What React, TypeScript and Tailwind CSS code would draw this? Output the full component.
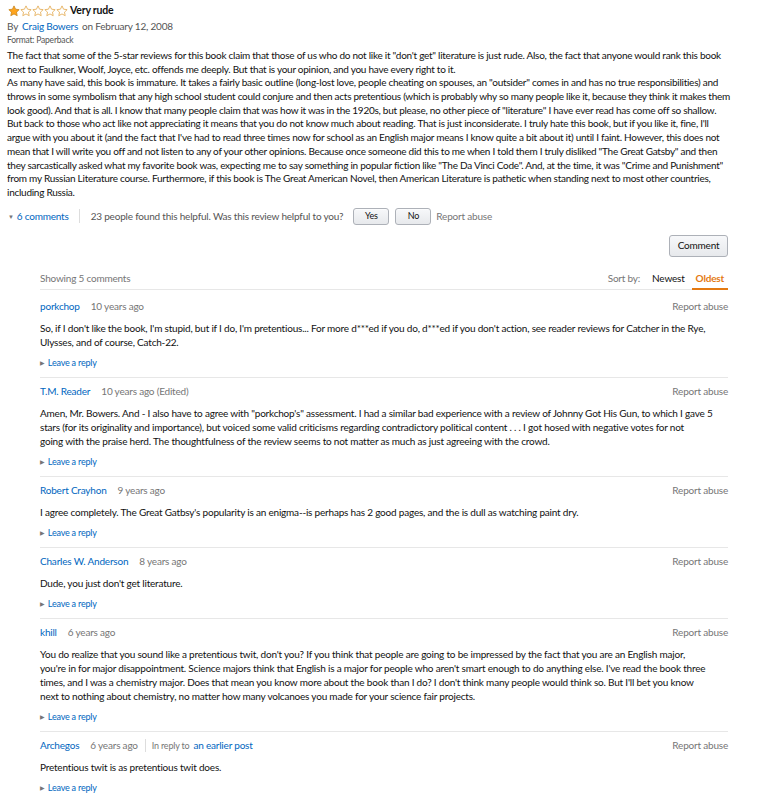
const reviewLines = [
  `The fact that some of the 5-star reviews for this book claim that those of us who do not like it "don't get" literature is just rude. Also, the fact that anyone would rank this book`,
  `next to Faulkner, Woolf, Joyce, etc. offends me deeply. But that is your opinion, and you have every right to it.`,
  `As many have said, this book is immature. It takes a fairly basic outline (long-lost love, people cheating on spouses, an "outsider" comes in and has no true responsibilities) and`,
  `throws in some symbolism that any high school student could conjure and then acts pretentious (which is probably why so many people like it, because they think it makes them`,
  `look good). And that is all. I know that many people claim that was how it was in the 1920s, but please, no other piece of "literature" I have ever read has come off so shallow.`,
  `But back to those who act like not appreciating it means that you do not know much about reading. That is just inconsiderate. I truly hate this book, but if you like it, fine, I'll`,
  `argue with you about it (and the fact that I've had to read three times now for school as an English major means I know quite a bit about it) until I faint. However, this does not`,
  `mean that I will write you off and not listen to any of your other opinions. Because once someone did this to me when I told them I truly disliked "The Great Gatsby" and then`,
  `they sarcastically asked what my favorite book was, expecting me to say something in popular fiction like "The Da Vinci Code". And, at the time, it was "Crime and Punishment"`,
  `from my Russian Literature course. Furthermore, if this book is The Great American Novel, then American Literature is pathetic when standing next to most other countries,`,
  `including Russia.`,
];

type Comment = {
  name: string;
  date: string;
  replyTo?: string;
  lines: string[];
};

const comments: Comment[] = [
  {
    name: "porkchop",
    date: "10 years ago",
    lines: [
      `So, if I don't like the book, I'm stupid, but if I do, I'm pretentious... For more d***ed if you do, d***ed if you don't action, see reader reviews for Catcher in the Rye,`,
      `Ulysses, and of course, Catch-22.`,
    ],
  },
  {
    name: "T.M. Reader",
    date: "10 years ago (Edited)",
    lines: [
      `Amen, Mr. Bowers. And - I also have to agree with "porkchop's" assessment. I had a similar bad experience with a review of Johnny Got His Gun, to which I gave 5`,
      `stars (for its originality and importance), but voiced some valid criticisms regarding contradictory political content . . . I got hosed with negative votes for not`,
      `going with the praise herd. The thoughtfulness of the review seems to not matter as much as just agreeing with the crowd.`,
    ],
  },
  {
    name: "Robert Crayhon",
    date: "9 years ago",
    lines: [
      `I agree completely. The Great Gatbsy's popularity is an enigma--is perhaps has 2 good pages, and the is dull as watching paint dry.`,
    ],
  },
  {
    name: "Charles W. Anderson",
    date: "8 years ago",
    lines: [`Dude, you just don't get literature.`],
  },
  {
    name: "khill",
    date: "6 years ago",
    lines: [
      `You do realize that you sound like a pretentious twit, don't you? If you think that people are going to be impressed by the fact that you are an English major,`,
      `you're in for major disappointment. Science majors think that English is a major for people who aren't smart enough to do anything else. I've read the book three`,
      `times, and I was a chemistry major. Does that mean you know more about the book than I do? I don't think many people would think so. But I'll bet you know`,
      `next to nothing about chemistry, no matter how many volcanoes you made for your science fair projects.`,
    ],
  },
  {
    name: "Archegos",
    date: "6 years ago",
    replyTo: "an earlier post",
    lines: [`Pretentious twit is as pretentious twit does.`],
  },
];

function Star({ filled }: { filled: boolean }) {
  return (
    <svg width="12" height="12" viewBox="0 0 24 24">
      <path
        d="M12 1.8l3.1 6.6 7.2.9-5.3 5 1.4 7.1L12 17.9l-6.4 3.5L7 14.3 1.7 9.3l7.2-.9z"
        fill={filled ? "#ffa41c" : "#fff"}
        stroke={filled ? "#c7841c" : "#e2a74a"}
        strokeWidth="1.6"
        strokeLinejoin="round"
      />
    </svg>
  );
}

function SmallButton({ label }: { label: string }) {
  return (
    <button
      type="button"
      className="flex h-[17px] w-[36px] items-center justify-center rounded-[3px] border border-[#adb1b8] bg-gradient-to-b from-[#f7f8fa] to-[#e7e9ec] text-[9px] text-[#111] shadow-[0_1px_0_rgba(255,255,255,0.6)_inset]"
    >
      {label}
    </button>
  );
}

function CommentItem({ c, first, last }: { c: Comment; first: boolean; last: boolean }) {
  return (
    <div className={`${first ? "pt-[10px]" : "pt-[7px]"} pb-[7px] ${last ? "" : "border-b border-[#e7e7e7]"}`}>
      <div className="flex h-[14px] items-center justify-between">
        <div className="flex items-center">
          <span className="text-[#0066c0]">{c.name}</span>
          <span className="ml-[11px] text-[#767676]">{c.date}</span>
          {c.replyTo && (
            <>
              <span className="ml-[7px] h-[13px] w-px bg-[#ddd]" />
              <span className="ml-[6px] text-[9px] text-[#767676]">In reply to</span>
              <span className="ml-[4px] text-[#0066c0]">{c.replyTo}</span>
            </>
          )}
        </div>
        <span className="text-[#767676]">Report abuse</span>
      </div>
      <div className="mt-[7px]">
        {c.lines.map((l, i) => (
          <div key={i} className="h-[14px] whitespace-nowrap leading-[14px]">
            {l}
          </div>
        ))}
      </div>
      <div className="mt-[7px] flex h-[14px] items-center">
        <span className="text-[6px] text-[#767676]">▶</span>
        <span className="ml-[3px] text-[9px] text-[#0066c0]">Leave a reply</span>
      </div>
    </div>
  );
}

export default function App() {
  return (
    <div className="min-h-[808px] w-[768px] overflow-hidden bg-white pl-[7px] pt-[4px] font-['Lato',sans-serif] text-[10px] tracking-[-0.2px] text-[#111]">
      <div className="w-[721px]">
        <div className="flex h-[14px] items-center">
          <div className="ml-[1px] flex items-center">
            {[0, 1, 2, 3, 4].map((i) => (
              <Star key={i} filled={i === 0} />
            ))}
          </div>
          <span className="ml-[2px] text-[10.5px] font-bold">Very rude</span>
        </div>
        <div className="mt-[1px] flex h-[14px] items-center text-[#555]">
          <span>By</span>
          <span className="ml-[4px] text-[#0066c0]">Craig Bowers</span>
          <span className="ml-[4px]">on February 12, 2008</span>
        </div>
        <div className="flex h-[14px] items-center text-[8.5px] text-[#555]">Format: Paperback</div>

        <div className="mt-[2px] tracking-[-0.26px]">
          {reviewLines.map((l, i) => (
            <div key={i} className="h-[13.7px] whitespace-nowrap leading-[13.7px]">
              {l}
            </div>
          ))}
        </div>

        <div className="mt-[8px] flex h-[17px] items-center">
          <span className="ml-[1px] text-[6px] text-[#767676]">▼</span>
          <span className="ml-[3px] text-[#0066c0]">6 comments</span>
          <span className="ml-[10px] h-[14px] w-px bg-[#ddd]" />
          <span className="ml-[11px] text-[#555]">23 people found this helpful. Was this review helpful to you?</span>
          <div className="ml-[10px] flex items-center gap-[6px]">
            <SmallButton label="Yes" />
            <SmallButton label="No" />
          </div>
          <span className="ml-[5px] text-[#767676]">Report abuse</span>
        </div>

        <div className="mt-[10px] flex justify-end">
          <button
            type="button"
            className="flex h-[22px] w-[59px] items-center justify-center rounded-[3px] border border-[#adb1b8] bg-gradient-to-b from-[#f7f8fa] to-[#e7e9ec] text-[10px] text-[#111]"
          >
            Comment
          </button>
        </div>

        <div className="ml-[33px]">
          <div className="mt-[12px] flex h-[21px] items-stretch justify-between border-b border-[#e7e7e7]">
            <span className="flex items-center text-[#767676]">Showing 5 comments</span>
            <div className="flex items-stretch">
              <span className="flex items-center text-[#767676]">Sort by:</span>
              <span className="ml-[8px] flex items-center px-[4px]">Newest</span>
              <span className="ml-[3px] -mb-px flex items-center border-b-2 border-[#e47911] px-[4px] font-bold text-[#e47911]">
                Oldest
              </span>
            </div>
          </div>

          {comments.map((c, i) => (
            <CommentItem key={i} c={c} first={i === 0} last={i === comments.length - 1} />
          ))}
        </div>
      </div>
    </div>
  );
}
